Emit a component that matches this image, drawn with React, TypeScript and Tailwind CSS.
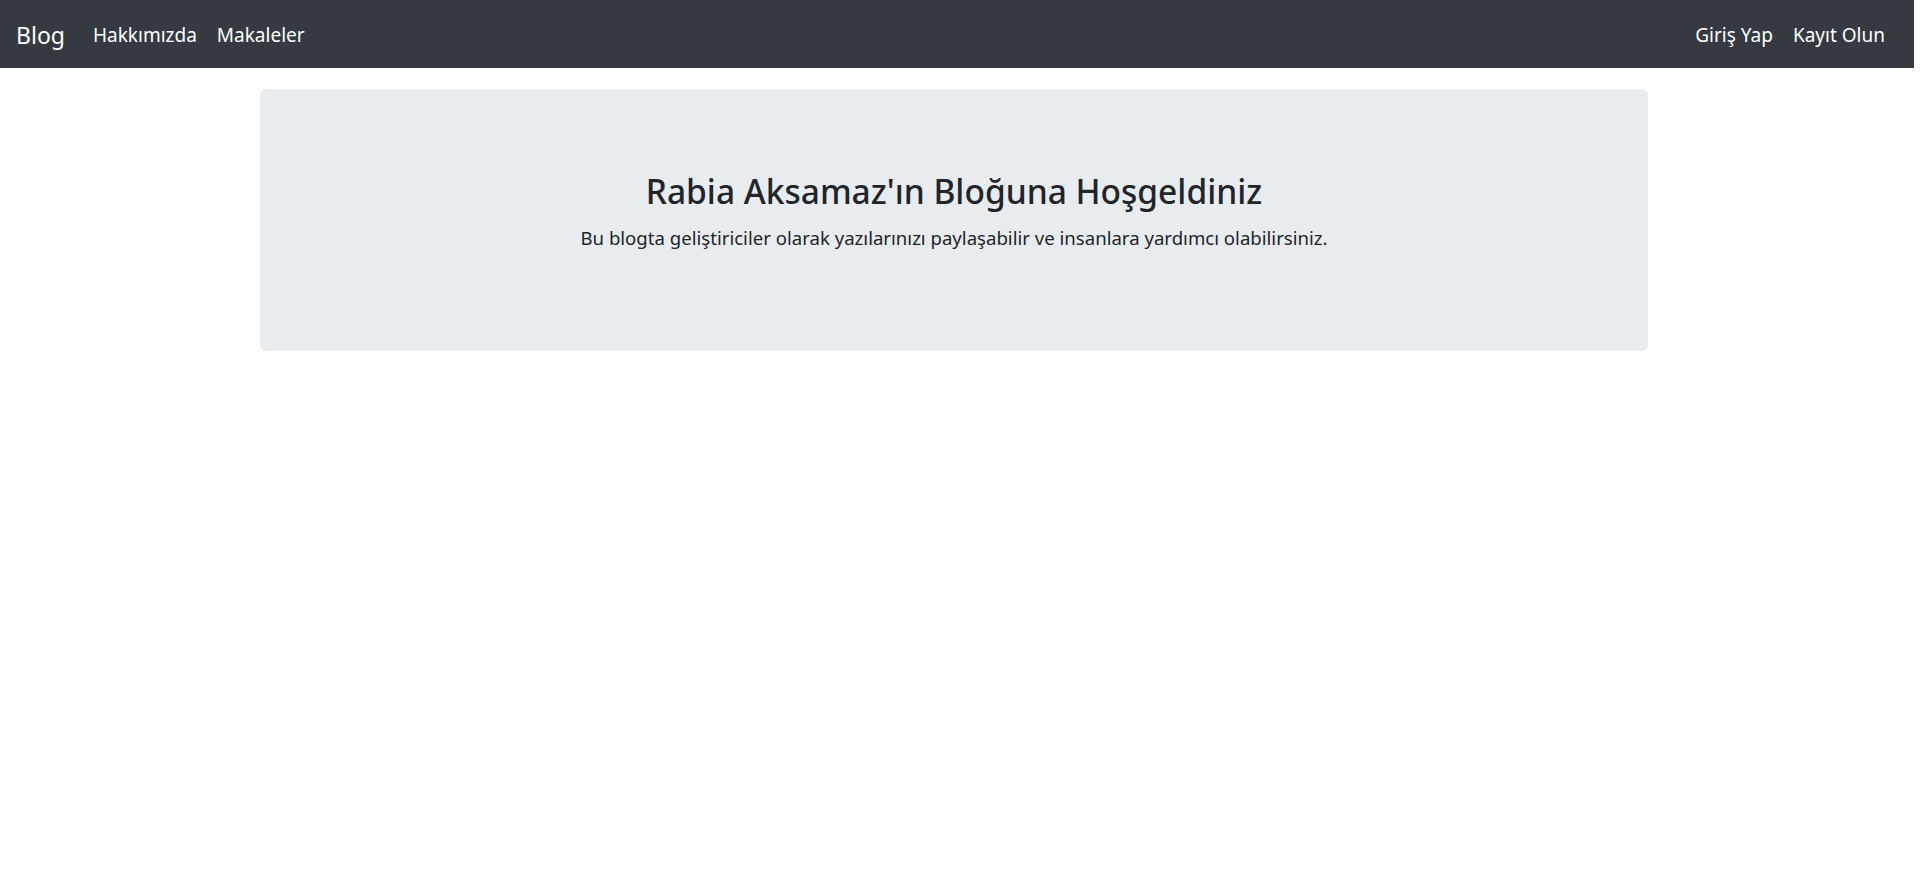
import React from "react";

export default function App() {
  return (
    <div className="min-h-screen bg-white font-['Noto_Sans',sans-serif] text-[#212529]">
      <nav className="mr-[6px] flex h-[68px] items-center bg-[#343a40] px-4 pt-[2px]">
        <a className="mr-[28px] text-[23px] text-white">Blog</a>
        <div className="flex gap-[20px] text-[19px] text-white">
          <a>Hakkımızda</a>
          <a>Makaleler</a>
        </div>
        <div className="ml-auto flex gap-[20px] pr-[13px] text-[19px] text-white">
          <a>Giriş Yap</a>
          <a>Kayıt Olun</a>
        </div>
      </nav>
      <div className="mr-[12px]">
        <div className="mx-auto mt-[21px] w-[1388px]">
          <div className="flex h-[262px] flex-col items-center rounded-[6px] bg-[#e9ecef] pt-[79px]">
            <h1 className="text-[33.5px] font-medium leading-[47px]">Rabia Aksamaz'ın Bloğuna Hoşgeldiniz</h1>
            <p className="mt-[8px] text-[18.6px] leading-[29px]">
              Bu blogta geliştiriciler olarak yazılarınızı paylaşabilir ve insanlara yardımcı olabilirsiniz.
            </p>
          </div>
        </div>
      </div>
    </div>
  );
}
